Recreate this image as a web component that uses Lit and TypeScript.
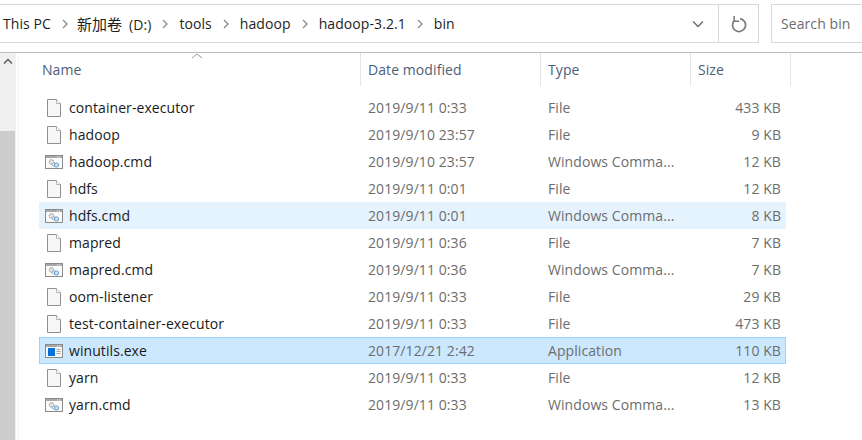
import { LitElement, html, css, svg } from "lit";
import { customElement } from "lit/decorators.js";

type Kind = "file" | "cmd" | "exe";
interface Row { name: string; date: string; type: string; size: string; kind: Kind; state?: string; }

const rows: Row[] = [
  { name: "container-executor", date: "2019/9/11 0:33", type: "File", size: "433 KB", kind: "file" },
  { name: "hadoop", date: "2019/9/10 23:57", type: "File", size: "9 KB", kind: "file" },
  { name: "hadoop.cmd", date: "2019/9/10 23:57", type: "Windows Comma...", size: "12 KB", kind: "cmd" },
  { name: "hdfs", date: "2019/9/11 0:01", type: "File", size: "12 KB", kind: "file" },
  { name: "hdfs.cmd", date: "2019/9/11 0:01", type: "Windows Comma...", size: "8 KB", kind: "cmd", state: "hover" },
  { name: "mapred", date: "2019/9/11 0:36", type: "File", size: "7 KB", kind: "file" },
  { name: "mapred.cmd", date: "2019/9/11 0:36", type: "Windows Comma...", size: "7 KB", kind: "cmd" },
  { name: "oom-listener", date: "2019/9/11 0:33", type: "File", size: "29 KB", kind: "file" },
  { name: "test-container-executor", date: "2019/9/11 0:33", type: "File", size: "473 KB", kind: "file" },
  { name: "winutils.exe", date: "2017/12/21 2:42", type: "Application", size: "110 KB", kind: "exe", state: "selected" },
  { name: "yarn", date: "2019/9/11 0:33", type: "File", size: "12 KB", kind: "file" },
  { name: "yarn.cmd", date: "2019/9/11 0:33", type: "Windows Comma...", size: "13 KB", kind: "cmd" },
];

const chevron = svg`<svg class="sep" width="8" height="10" viewBox="0 0 8 10"><path d="M2 1l4 4-4 4" fill="none" stroke="#8a8a8a" stroke-width="1.3"/></svg>`;

function icon(kind: Kind) {
  if (kind === "file") {
    return svg`<svg width="16" height="18" viewBox="0 0 16 18"><path d="M1.500.500h9l4 4v13h-13z" fill="#f7f7f7" stroke="#8f8f8f"/><path d="M10.500.500v4h4" fill="#fff" stroke="#b5b5b5"/></svg>`;
  }
  if (kind === "cmd") {
    return svg`<svg width="18" height="14" viewBox="0 0 18 14"><rect x=".5" y=".5" width="17" height="13" fill="#fbfbfb" stroke="#8a8a8a"/><rect x="1" y="1" width="16" height="2" fill="#a8a8a8"/><path d="M12 2h1M14 2h1" stroke="#f2f2f2"/><circle cx="6.500" cy="7" r="2.300" fill="#e4e4e4" stroke="#8c8c8c" stroke-dasharray="1.500 .6"/><circle cx="9" cy="9.500" r="1.700" fill="#ececec" stroke="#9a9a9a" stroke-dasharray="1.200 .5"/><circle cx="11.500" cy="10" r="2.100" fill="#cfe3f4" stroke="#5f9fd6"/></svg>`;
  }
  return svg`<svg width="18" height="14" viewBox="0 0 18 14"><rect x=".5" y=".5" width="17" height="13" fill="#f6f8fa" stroke="#8a8a8a"/><rect x="1" y="1" width="16" height="2" fill="#a8a8a8"/><path d="M12 2h1M14 2h1" stroke="#f2f2f2"/><rect x="3" y="4" width="7" height="8" fill="#0a6fd8"/><path d="M11.500 5.500h4M11.500 7.500h4M11.500 9.500h4" stroke="#a0a0a0"/></svg>`;
}

@customElement("app-root")
export class AppRoot extends LitElement {
  static styles = css`
    :host {
      display: block;
      width: 862px;
      height: 440px;
      overflow: hidden;
      background: #fff;
      font-family: "Open Sans", "Noto Sans CJK SC", sans-serif;
      font-size: 14px;
      letter-spacing: 0.08px;
      color: #1a1a1a;
    }
    .toolbar {
      display: flex;
      height: 53px;
      box-sizing: border-box;
      padding-top: 4px;
      border-bottom: 1px solid #bdbdbd;
    }
    .address {
      display: flex;
      flex: none;
      width: 759px;
      height: 39px;
      box-sizing: border-box;
      border: solid #d9d9d9;
      border-width: 1px 1px 1px 0;
    }
    .crumbs {
      display: flex;
      align-items: center;
      flex: 1;
      padding-left: 3px;
      color: #1e1e1e;
    }
    .cjk { font-size: 15px; letter-spacing: 0; margin: 0 7px 0 -2px; }
    .sep { margin: 0 10px; flex: none; }
    .drop {
      width: 40px;
      display: flex;
      align-items: center;
      justify-content: center;
    }
    .refresh {
      width: 39px;
      display: flex;
      align-items: center;
      justify-content: center;
      border-left: 1px solid #d9d9d9;
    }
    .search {
      margin-left: 12px;
      flex: 1;
      height: 39px;
      box-sizing: border-box;
      border: solid #d9d9d9;
      border-width: 1px 0 1px 1px;
      color: #6d6d6d;
      padding-left: 9px;
      display: flex;
      align-items: center;
      white-space: nowrap;
    }
    .body { display: flex; height: 387px; }
    .scroll {
      width: 16px;
      flex: none;
      background: #f0f0f0;
      display: flex;
      flex-direction: column;
    }
    .arrow { height: 78px; display: flex; justify-content: center; padding-top: 5px; box-sizing: border-box; }
    .thumb { flex: 1; background: #cdcdcd; margin-right: 1px; }
    .content {
      flex: 1;
      min-width: 0;
      margin-left: 2px;
      border-left: 1px solid #f4f4f4;
      padding-left: 20px;
    }
    .head {
      display: grid;
      grid-template-columns: 322px 180px 150px 100px;
      height: 33px;
      position: relative;
      color: #4c607a;
    }
    .head div {
      padding-left: 7px;
      border-right: 1px solid #e5e5e5;
      line-height: 33px;
    }
    .head div:first-child { padding-left: 3px; }
    .caret { position: absolute; left: 152px; top: 0; }
    .list { margin-top: 8px; width: 747px; }
    .row {
      display: grid;
      grid-template-columns: 322px 180px 150px 90px;
      height: 27px;
      align-items: center;
      color: #6d6d6d;
    }
    .row.hover { background: #e5f3ff; }
    .row.selected { background: #cce8ff; box-shadow: inset 0 0 0 1px #99d1ff; }
    .name { display: flex; align-items: center; color: #1a1a1a; min-width: 0; }
    .ic { width: 30px; padding: 0 3px 0 3px; box-sizing: border-box; display: flex; justify-content: center; flex: none; }
    .date { padding-left: 7px; }
    .type { padding-left: 7px; white-space: nowrap; }
    .size { text-align: right; white-space: nowrap; }
  `;

  render() {
    return html`
      <div class="toolbar">
        <div class="address">
          <div class="crumbs">
            <span>This PC</span>${chevron}
            <span><span class="cjk">新加卷</span>(D:)</span>${chevron}
            <span>tools</span>${chevron}
            <span>hadoop</span>${chevron}
            <span>hadoop-3.2.1</span>${chevron}
            <span>bin</span>
          </div>
          <div class="drop">
            <svg width="12" height="8" viewBox="0 0 12 8"><path d="M1 1.500l5 5 5-5" fill="none" stroke="#6d6d6d" stroke-width="1.500"/></svg>
          </div>
          <div class="refresh">
            <svg width="18" height="18" viewBox="0 0 18 18"><path d="M10 3.600a6.500 6.500 0 1 1-5.300 1.600" fill="none" stroke="#7a7a7a" stroke-width="1.700"/><path d="M4.200 1v5.200h5" fill="none" stroke="#7a7a7a" stroke-width="1.500"/></svg>
          </div>
        </div>
        <div class="search">Search bin</div>
      </div>
      <div class="body">
        <div class="scroll">
          <div class="arrow">
            <svg width="10" height="7" viewBox="0 0 10 7"><path d="M1 5.500l4-4 4 4" fill="none" stroke="#5a5a5a" stroke-width="1.500"/></svg>
          </div>
          <div class="thumb"></div>
        </div>
        <div class="content">
          <div class="head">
            <div>Name</div>
            <div>Date modified</div>
            <div>Type</div>
            <div>Size</div>
            <svg class="caret" width="12" height="6" viewBox="0 0 12 6"><path d="M1 5l5-4 5 4" fill="none" stroke="#9a9a9a"/></svg>
          </div>
          <div class="list">
            ${rows.map((r) => html`
              <div class="row ${r.state ?? ""}">
                <div class="name"><span class="ic">${icon(r.kind)}</span><span>${r.name}</span></div>
                <div class="date">${r.date}</div>
                <div class="type">${r.type}</div>
                <div class="size">${r.size}</div>
              </div>`)}
          </div>
        </div>
      </div>
    `;
  }
}
